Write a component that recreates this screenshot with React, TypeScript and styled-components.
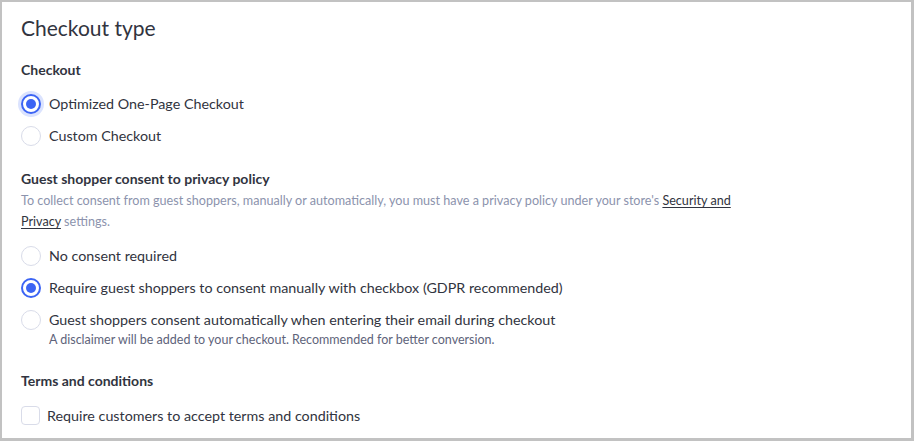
import React from "react";
import styled, { createGlobalStyle } from "styled-components";

const Global = createGlobalStyle`
  html, body {
    margin: 0;
    padding: 0;
    background: #c2c2c2;
  }
  body {
    font-family: Lato, "Noto Sans", sans-serif;
    color: #313440;
    -webkit-font-smoothing: antialiased;
  }
`;

const Card = styled.section`
  box-sizing: border-box;
  margin: 2px 3px 0 2px;
  height: 436px;
  background: #ffffff;
  padding: 12px 19px 0 19px;
  overflow: hidden;
`;

const Title = styled.h1`
  margin: 0;
  font-size: 21px;
  line-height: 28px;
  font-weight: 400;
  color: #313440;
`;

const Section = styled.div<{ $gap: number }>`
  margin-top: ${(p) => p.$gap}px;
  display: flex;
  flex-direction: column;
`;

const Label = styled.h2`
  margin: 0;
  font-size: 14px;
  line-height: 20px;
  font-weight: 700;
  color: #313440;
`;

const Description = styled.p`
  margin: 1px 0 0 0;
  font-size: 12.6px;
  line-height: 21px;
  color: #8c93ad;
  max-width: 735px;
`;

const Link = styled.a`
  color: #313440;
  text-decoration: underline;
  text-underline-offset: 2px;
`;

const Options = styled.div<{ $top: number }>`
  margin-top: ${(p) => p.$top}px;
  display: flex;
  flex-direction: column;
  gap: 8px;
`;

const Row = styled.label<{ $gap: number }>`
  display: flex;
  align-items: flex-start;
  gap: ${(p) => p.$gap}px;
  cursor: pointer;
`;

const RadioMark = styled.span<{ $checked: boolean; $focus?: boolean }>`
  position: relative;
  flex: none;
  box-sizing: border-box;
  width: 20px;
  height: 20px;
  margin: 2px 0;
  border-radius: 50%;
  border: ${(p) => (p.$checked ? "2px solid #3c64f4" : "1px solid #d9dce9")};
  background: #ffffff;
  box-shadow: ${(p) => (p.$focus ? "0 0 0 3px #dbe3fe" : "none")};

  &::after {
    content: "";
    display: ${(p) => (p.$checked ? "block" : "none")};
    position: absolute;
    left: 3px;
    top: 3px;
    width: 10px;
    height: 10px;
    border-radius: 50%;
    background: #3c64f4;
  }
`;

const CheckMark = styled.span`
  flex: none;
  box-sizing: border-box;
  width: 19px;
  height: 19px;
  margin: 2px 0 3px 0;
  border-radius: 4px;
  border: 1px solid #d9dce9;
  background: #ffffff;
`;

const OptionBody = styled.span`
  display: flex;
  flex-direction: column;
`;

const OptionText = styled.span`
  font-size: 14.3px;
  line-height: 24px;
  color: #313440;
`;

const Helper = styled.span`
  font-size: 12.5px;
  line-height: 16px;
  color: #5e637a;
`;

type RadioProps = {
  checked?: boolean;
  focus?: boolean;
  text: string;
  helper?: string;
};

const Radio = ({ checked = false, focus = false, text, helper }: RadioProps) => (
  <Row $gap={8}>
    <RadioMark $checked={checked} $focus={focus} />
    <OptionBody>
      <OptionText>{text}</OptionText>
      {helper && <Helper>{helper}</Helper>}
    </OptionBody>
  </Row>
);

export default function App() {
  return (
    <>
      <Global />
      <Card>
        <Title>Checkout type</Title>

        <Section $gap={18}>
          <Label>Checkout</Label>
          <Options $top={12}>
            <Radio checked focus text="Optimized One-Page Checkout" />
            <Radio text="Custom Checkout" />
          </Options>
        </Section>

        <Section $gap={21}>
          <Label>Guest shopper consent to privacy policy</Label>
          <Description>
            To collect consent from guest shoppers, manually or automatically, you must have a
            privacy policy under your store's <Link href="#">Security and Privacy</Link> settings.
          </Description>
          <Options $top={12}>
            <Radio text="No consent required" />
            <Radio checked text="Require guest shoppers to consent manually with checkbox (GDPR recommended)" />
            <Radio
              text="Guest shoppers consent automatically when entering their email during checkout"
              helper="A disclaimer will be added to your checkout. Recommended for better conversion."
            />
          </Options>
        </Section>

        <Section $gap={23}>
          <Label>Terms and conditions</Label>
          <Options $top={13}>
            <Row $gap={7}>
              <CheckMark />
              <OptionText>Require customers to accept terms and conditions</OptionText>
            </Row>
          </Options>
        </Section>
      </Card>
    </>
  );
}
